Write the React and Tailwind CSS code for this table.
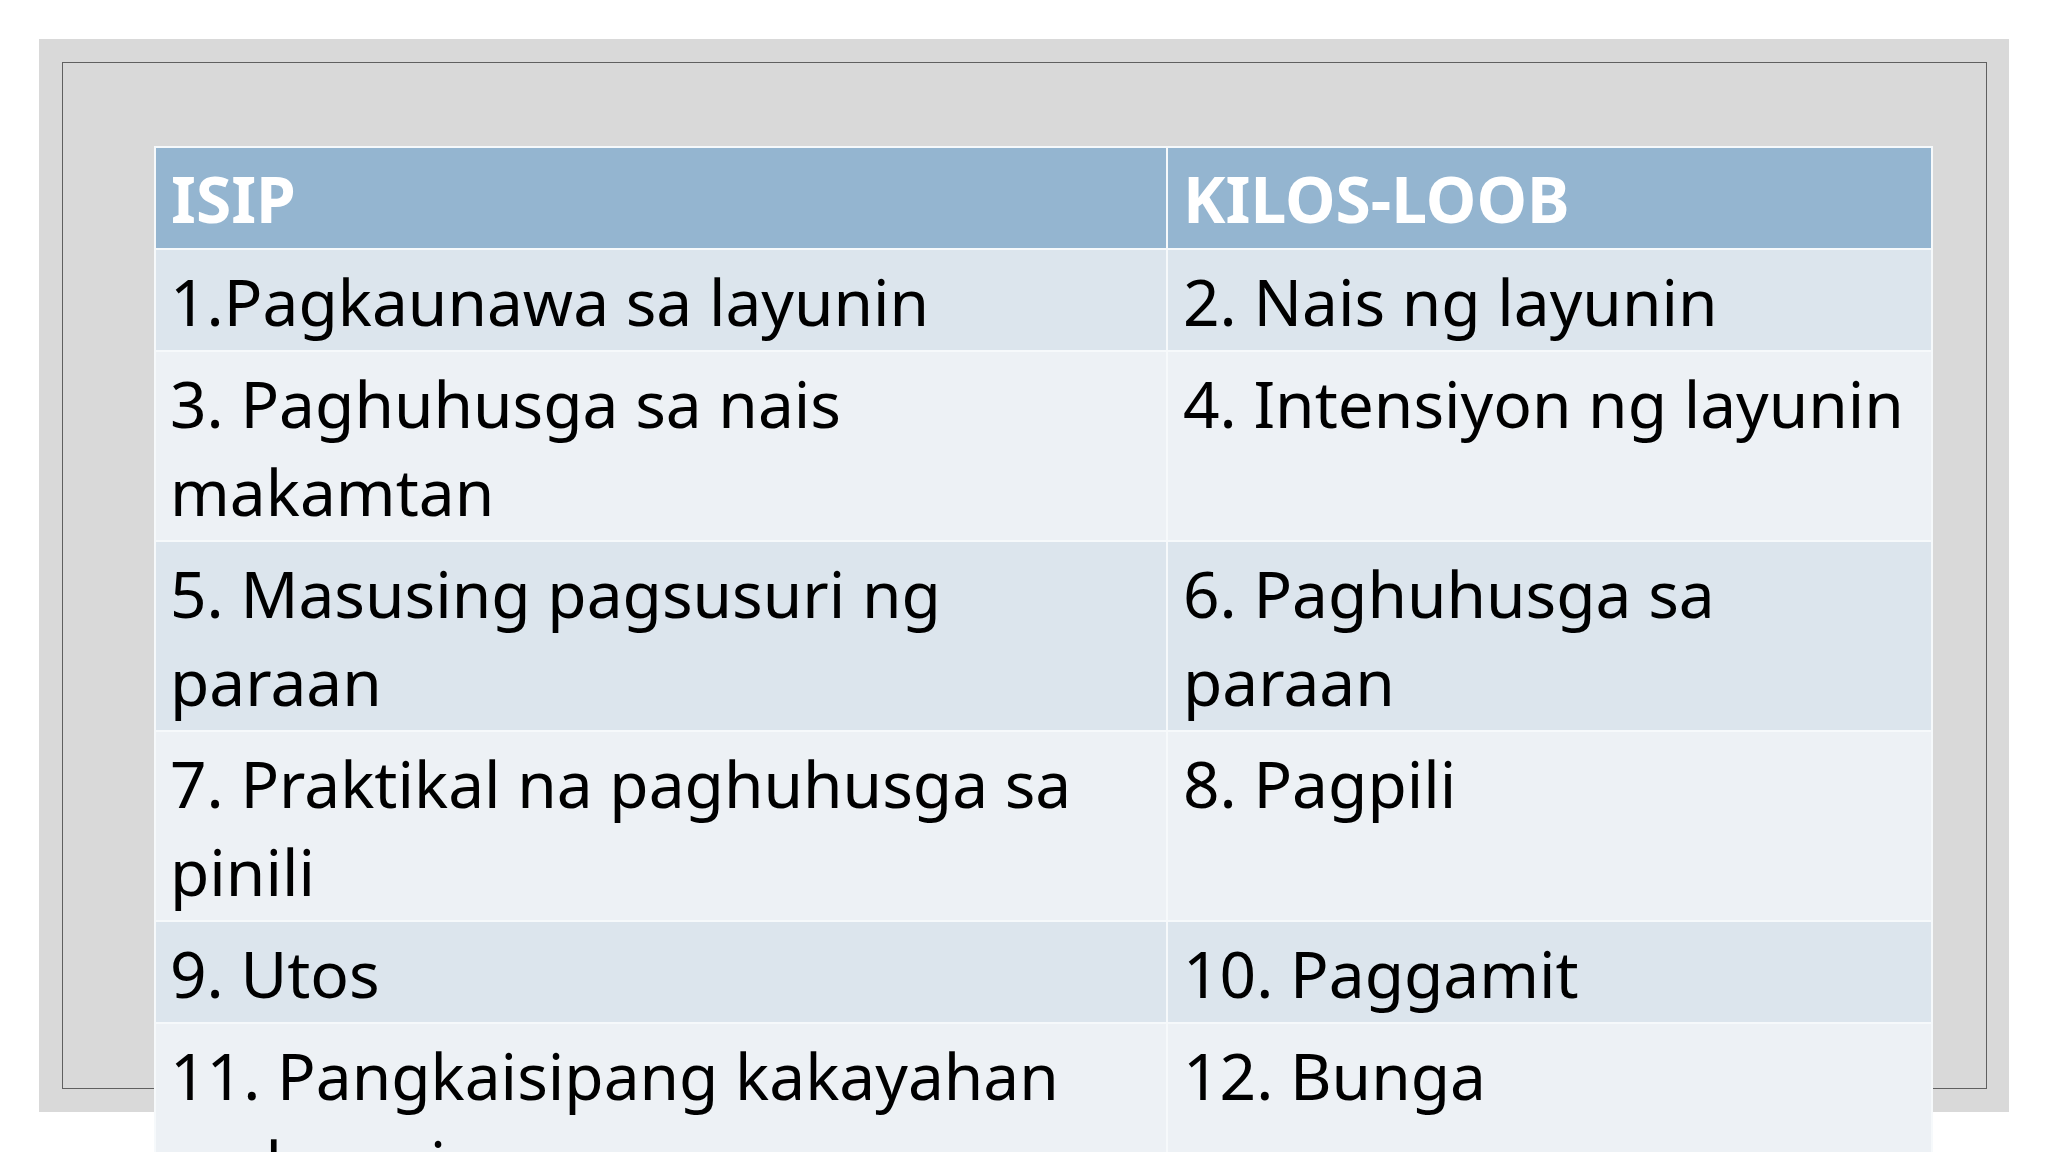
const ROWS = [
  ["1.Pagkaunawa sa layunin", "2. Nais ng layunin"],
  ["3. Paghuhusga sa nais makamtan", "4. Intensiyon ng layunin"],
  ["5. Masusing pagsusuri ng paraan", "6. Paghuhusga sa paraan"],
  ["7. Praktikal na paghuhusga sa pinili", "8. Pagpili"],
  ["9. Utos", "10. Paggamit"],
  ["11. Pangkaisipang kakayahan ng layunin", "12. Bunga"],
];

function HeaderCell({ children }) {
  return (
    <div className="bg-[#94b5d0] pl-[15px] pr-[14px] pt-[9px] pb-[7px] text-[64px] leading-[84px] font-bold text-white">
      {children}
    </div>
  );
}

function BodyCell({ children, odd, left }) {
  return (
    <div
      className={`${odd ? "bg-[#dce5ed]" : "bg-[#edf1f5]"} ${left ? "pl-[14px] pr-[40px]" : "pl-[15px] pr-[12px]"} pt-[8px] pb-[4px] text-[64px] leading-[88px] text-black`}
    >
      {children}
    </div>
  );
}

export default function App() {
  return (
    <div className="w-[2048px] h-[1152px] overflow-hidden bg-white pt-[39px] pl-[39px] font-['Noto_Sans',sans-serif]">
      <div className="w-[1970px] h-[1073px] bg-[#d9d9d9] pt-[23px] pl-[23px]">
        <div className="w-[1925px] h-[1027px] border border-[#606060] pl-[91px] pt-[83px]">
          <div className="w-[1779px] grid grid-cols-[1010px_763px] gap-[2px] p-[2px] bg-[#f6f9fb]">
            <HeaderCell>ISIP</HeaderCell>
            <HeaderCell>KILOS-LOOB</HeaderCell>
            {ROWS.map(([a, b], i) => (
              <div key={i} className="contents">
                <BodyCell odd={i % 2 === 0} left>
                  {a}
                </BodyCell>
                <BodyCell odd={i % 2 === 0}>{b}</BodyCell>
              </div>
            ))}
          </div>
        </div>
      </div>
    </div>
  );
}
